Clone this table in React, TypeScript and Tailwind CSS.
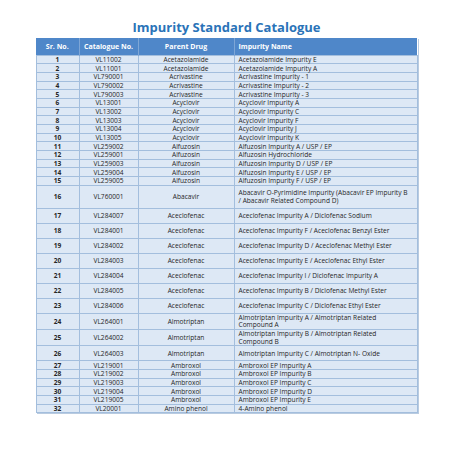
import React from "react";

type Row = [string, string, string, string[], number];

const rows: Row[] = [
  ["1", "VL11002", "Acetazolamide", ["Acetazolamide Impurity E"], 0],
  ["2", "VL11001", "Acetazolamide", ["Acetazolamide Impurity A"], 0],
  ["3", "VL790001", "Acrivastine", ["Acrivastine Impurity - 1"], 0],
  ["4", "VL790002", "Acrivastine", ["Acrivastine Impurity - 2"], 0],
  ["5", "VL790003", "Acrivastine", ["Acrivastine Impurity - 3"], 0],
  ["6", "VL13001", "Acyclovir", ["Acyclovir Impurity A"], 0],
  ["7", "VL13002", "Acyclovir", ["Acyclovir Impurity C"], 0],
  ["8", "VL13003", "Acyclovir", ["Acyclovir Impurity F"], 0],
  ["9", "VL13004", "Acyclovir", ["Acyclovir Impurity J"], 0],
  ["10", "VL13005", "Acyclovir", ["Acyclovir Impurity K"], 0],
  ["11", "VL259002", "Alfuzosin", ["Alfuzosin Impurity A / USP / EP"], 0],
  ["12", "VL259001", "Alfuzosin", ["Alfuzosin Hydrochloride"], 0],
  ["13", "VL259003", "Alfuzosin", ["Alfuzosin Impurity D / USP / EP"], 0],
  ["14", "VL259004", "Alfuzosin", ["Alfuzosin Impurity E / USP / EP"], 0],
  ["15", "VL259005", "Alfuzosin", ["Alfuzosin Impurity F / USP / EP"], 0],
  ["16", "VL760001", "Abacavir", ["Abacavir O-Pyrimidine Impurity (Abacavir EP Impurity B", "/ Abacavir Related Compound D)"], 2],
  ["17", "VL284007", "Aceclofenac", ["Aceclofenac Impurity A / Diclofenac Sodium"], 1],
  ["18", "VL284001", "Aceclofenac", ["Aceclofenac Impurity F / Aceclofenac Benzyl Ester"], 1],
  ["19", "VL284002", "Aceclofenac", ["Aceclofenac Impurity D / Aceclofenac Methyl Ester"], 1],
  ["20", "VL284003", "Aceclofenac", ["Aceclofenac Impurity E / Aceclofenac Ethyl Ester"], 1],
  ["21", "VL284004", "Aceclofenac", ["Aceclofenac Impurity I / Diclofenac Impurity A"], 1],
  ["22", "VL284005", "Aceclofenac", ["Aceclofenac Impurity B / Diclofenac Methyl Ester"], 1],
  ["23", "VL284006", "Aceclofenac", ["Aceclofenac Impurity C / Diclofenac Ethyl Ester"], 1],
  ["24", "VL264001", "Almotriptan", ["Almotriptan Impurity A / Almotriptan Related", "Compound A"], 1],
  ["25", "VL264002", "Almotriptan", ["Almotriptan Impurity B / Almotriptan Related", "Compound B"], 1],
  ["26", "VL264003", "Almotriptan", ["Almotriptan Impurity C / Almotriptan N- Oxide"], 1],
  ["27", "VL219001", "Ambroxol", ["Ambroxol EP Impurity A"], 0],
  ["28", "VL219002", "Ambroxol", ["Ambroxol EP Impurity B"], 0],
  ["29", "VL219003", "Ambroxol", ["Ambroxol EP Impurity C"], 0],
  ["30", "VL219004", "Ambroxol", ["Ambroxol EP Impurity D"], 0],
  ["31", "VL219005", "Ambroxol", ["Ambroxol EP Impurity E"], 0],
  ["32", "VL20001", "Amino phenol", ["4-Amino phenol"], 0],
];

export default function App() {
  return (
    <div
      className="w-[453px] h-[453px] bg-white flex flex-col items-center overflow-hidden"
      style={{ fontFamily: '"Open Sans", "Liberation Sans", sans-serif' }}
    >
      <h1 className="mt-[17px] h-[21px] text-[13px] leading-[21px] font-bold text-[#2a73b8]">
        Impurity Standard Catalogue
      </h1>
      <table className="w-[381px] border-collapse table-fixed text-[6.6px] leading-[7px] text-[#262626] shadow-[1px_1px_0_#b9cbe0]">
        <colgroup>
          <col className="w-[43px]" />
          <col className="w-[59px]" />
          <col className="w-[96px]" />
          <col className="w-[183px]" />
        </colgroup>
        <thead>
          <tr className="h-[17px] bg-[#4f87c9] text-white font-bold text-[7px]">
            <th className="border-r border-[#7ea6d6] text-center font-bold">Sr. No.</th>
            <th className="border-r border-[#7ea6d6] text-center font-bold">Catalogue No.</th>
            <th className="border-r border-[#7ea6d6] text-center font-bold">Parent Drug</th>
            <th className="text-left pl-[4px] font-bold">Impurity Name</th>
          </tr>
        </thead>
        <tbody>
          {rows.map((r) => (
            <tr
              key={r[0]}
              className={
                "bg-[#dde8f5] " +
                (r[4] === 2 ? "h-[23px]" : r[4] === 1 ? "h-[15px]" : "h-[8.7px]")
              }
            >
              <td className="border border-[#a3bedd] text-center font-bold p-0">{r[0]}</td>
              <td className="border border-[#a3bedd] text-center p-0">{r[1]}</td>
              <td className="border border-[#a3bedd] text-center p-0">{r[2]}</td>
              <td className="border border-[#a3bedd] text-left pl-[4px] py-0 whitespace-nowrap">
                {r[3].map((line, i) => (
                  <div key={i} className={r[3].length > 1 ? "leading-[7.6px]" : ""}>
                    {line}
                  </div>
                ))}
              </td>
            </tr>
          ))}
        </tbody>
      </table>
    </div>
  );
}
